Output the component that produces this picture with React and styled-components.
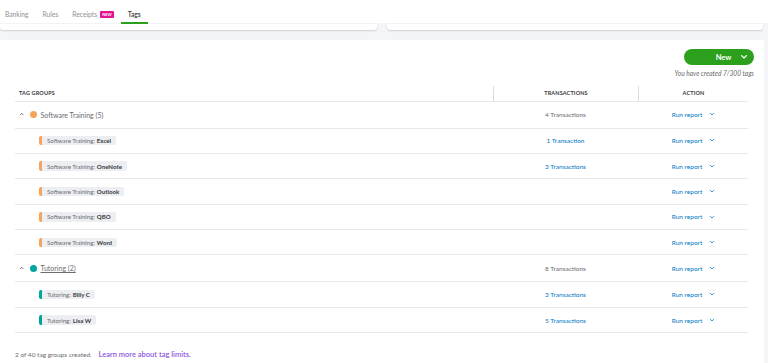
import React from 'react';
import styled, { createGlobalStyle } from 'styled-components';

const GlobalStyle = createGlobalStyle`
  body {
    margin: 0;
    background: #f4f5f8;
    font-family: Lato, "Liberation Sans", sans-serif;
    color: #393a3d;
  }
`;

const Page = styled.div`
  width: 768px;
  height: 363px;
  overflow: hidden;
  display: flex;
  flex-direction: column;
`;

const TabBar = styled.nav`
  height: 23px;
  background: #fff;
  display: flex;
  align-items: stretch;
`;

const Tab = styled.div`
  display: flex;
  align-items: center;
  gap: 3px;
  padding: 6px 7px 0;
  font-size: 6.7px;
  color: ${(p) => (p.$active ? '#393a3d' : '#8d9096')};
  font-weight: ${(p) => (p.$active ? 600 : 400)};
  border-bottom: 2px solid ${(p) => (p.$active ? '#2ca01c' : 'transparent')};
  margin-bottom: -1px;

  &:first-child {
    padding-left: 5px;
  }
`;

const Badge = styled.span`
  background: #e4148f;
  color: #fff;
  font-size: 4px;
  font-weight: 700;
  padding: 1px 2px;
  border-radius: 1px;
  line-height: 5px;
`;

const CardsRow = styled.div`
  display: flex;
  gap: 10px;
  padding-right: 5px;
  margin-top: 1px;
`;

const Card = styled.div`
  flex: 1;
  height: 6px;
  background: #fff;
  border-radius: 0 0 3px 3px;
  box-shadow: 0 1px 2px rgba(0, 0, 0, 0.16);
`;

const Panel = styled.main`
  flex: 1;
  margin-top: 10px;
  margin-right: 4px;
  background: #fff;
  padding: 9px 10px 0 15px;
  display: flex;
  flex-direction: column;
`;

const Actions = styled.div`
  display: flex;
  flex-direction: column;
  align-items: flex-end;
`;

const NewButton = styled.button`
  height: 16px;
  width: 70px;
  border: none;
  border-radius: 8px;
  background: #2ca01c;
  color: #fff;
  font-family: inherit;
  font-size: 7.5px;
  font-weight: 700;
  display: flex;
  align-items: center;
  padding: 0 7px 0 22px;

  span {
    flex: 1;
    text-align: center;
  }
`;

const Caption = styled.div`
  margin-top: 4px;
  line-height: 9px;
  font-size: 6.6px;
  font-style: italic;
  color: #6b6c72;
`;

const Table = styled.div`
  margin-top: 7.5px;
  width: 733px;
`;

const Row = styled.div`
  display: grid;
  grid-template-columns: 478px 145px 110px;
  align-items: center;
  height: ${(p) => p.$h}px;
  border-bottom: 1px solid #e6e8eb;
  box-sizing: border-box;
`;

const HeadCell = styled.div`
  height: 100%;
  display: flex;
  align-items: center;
  justify-content: ${(p) => (p.$first ? 'flex-start' : 'center')};
  padding-left: ${(p) => (p.$first ? '4px' : '0')};
  border-left: ${(p) => (p.$first ? 'none' : '1px solid #d9dbe0')};
  font-size: 5.5px;
  font-weight: 700;
  letter-spacing: 0.15px;
  color: #393a3d;
  text-transform: uppercase;
`;

const NameCell = styled.div`
  display: flex;
  align-items: center;
  padding-left: ${(p) => p.$indent}px;
  font-size: 7px;
  color: #6b6c72;
`;

const Dot = styled.span`
  width: 7px;
  height: 7px;
  border-radius: 50%;
  background: ${(p) => p.$color};
  margin: 0 4px 0 6px;
`;

const GroupName = styled.span`
  text-decoration: ${(p) => (p.$link ? 'underline' : 'none')};
`;

const Pill = styled.span`
  display: inline-flex;
  align-items: center;
  gap: 2px;
  height: 9.5px;
  background: #eceef1;
  border-radius: 2px;
  border-left: 3px solid ${(p) => p.$color};
  padding: 0 5px;
  font-size: 6.1px;
  color: #6b6c72;

  b {
    color: #393a3d;
    font-weight: 700;
  }
`;

const CountCell = styled.div`
  text-align: center;
  font-size: 6.5px;
  color: ${(p) => (p.$link ? '#0077c5' : '#6b6c72')};
`;

const ActionCell = styled.div`
  display: flex;
  justify-content: center;
  align-items: center;
  gap: 8px;
  font-size: 6.5px;
  color: #0077c5;
`;

const Footer = styled.div`
  margin-top: 17px;
  font-size: 6.5px;
  color: #6b6c72;

  a {
    color: #8d55e0;
    font-size: 7.5px;
    font-weight: 600;
    margin-left: 7px;
    text-decoration: none;
  }
`;

const Chevron = ({ color, size = 4, up }) => (
  <svg width={size} height={size * 0.6} viewBox="0 0 10 6" fill="none">
    <path
      d={up ? 'M1 5L5 1L9 5' : 'M1 1L5 5L9 1'}
      stroke={color}
      strokeWidth="2"
      strokeLinecap="round"
      strokeLinejoin="round"
    />
  </svg>
);

const ORANGE = '#f7a35c';
const TEAL = '#00a5a0';

const groups = [
  {
    name: 'Software Training (5)',
    color: ORANGE,
    count: '4 Transactions',
    tags: [
      ['Software Training:', 'Excel', '1 Transaction'],
      ['Software Training:', 'OneNote', '3 Transactions'],
      ['Software Training:', 'Outlook', ''],
      ['Software Training:', 'QBO', ''],
      ['Software Training:', 'Word', ''],
    ],
  },
  {
    name: 'Tutoring (2)',
    color: TEAL,
    link: true,
    count: '8 Transactions',
    tags: [
      ['Tutoring:', 'Billy C', '3 Transactions'],
      ['Tutoring:', 'Lisa W', '5 Transactions'],
    ],
  },
];

function RunReport() {
  return (
    <ActionCell>
      Run report
      <Chevron color="#0077c5" size={4} />
    </ActionCell>
  );
}

export default function App() {
  return (
    <Page>
      <GlobalStyle />
      <TabBar>
        <Tab>Banking</Tab>
        <Tab>Rules</Tab>
        <Tab>
          Receipts <Badge>NEW</Badge>
        </Tab>
        <Tab $active>Tags</Tab>
      </TabBar>
      <CardsRow>
        <Card />
        <Card />
      </CardsRow>
      <Panel>
        <Actions>
          <NewButton>
            <span>New</span>
            <Chevron color="#fff" size={6} />
          </NewButton>
          <Caption>You have created 7/300 tags</Caption>
        </Actions>
        <Table>
          <Row $h={16}>
            <HeadCell $first>Tag groups</HeadCell>
            <HeadCell>Transactions</HeadCell>
            <HeadCell>Action</HeadCell>
          </Row>
          {groups.map((g) => (
            <React.Fragment key={g.name}>
              <Row $h={27}>
                <NameCell $indent={5}>
                  <Chevron color="#393a3d" size={3.5} up />
                  <Dot $color={g.color} />
                  <GroupName $link={g.link}>{g.name}</GroupName>
                </NameCell>
                <CountCell>{g.count}</CountCell>
                <RunReport />
              </Row>
              {g.tags.map(([prefix, label, count]) => (
                <Row key={label} $h={25.4}>
                  <NameCell $indent={24}>
                    <Pill $color={g.color}>
                      <span>{prefix}</span>
                      <b>{label}</b>
                    </Pill>
                  </NameCell>
                  <CountCell $link>{count}</CountCell>
                  <RunReport />
                </Row>
              ))}
            </React.Fragment>
          ))}
        </Table>
        <Footer>
          2 of 40 tag groups created.
          <a href="#">Learn more about tag limits.</a>
        </Footer>
      </Panel>
    </Page>
  );
}
